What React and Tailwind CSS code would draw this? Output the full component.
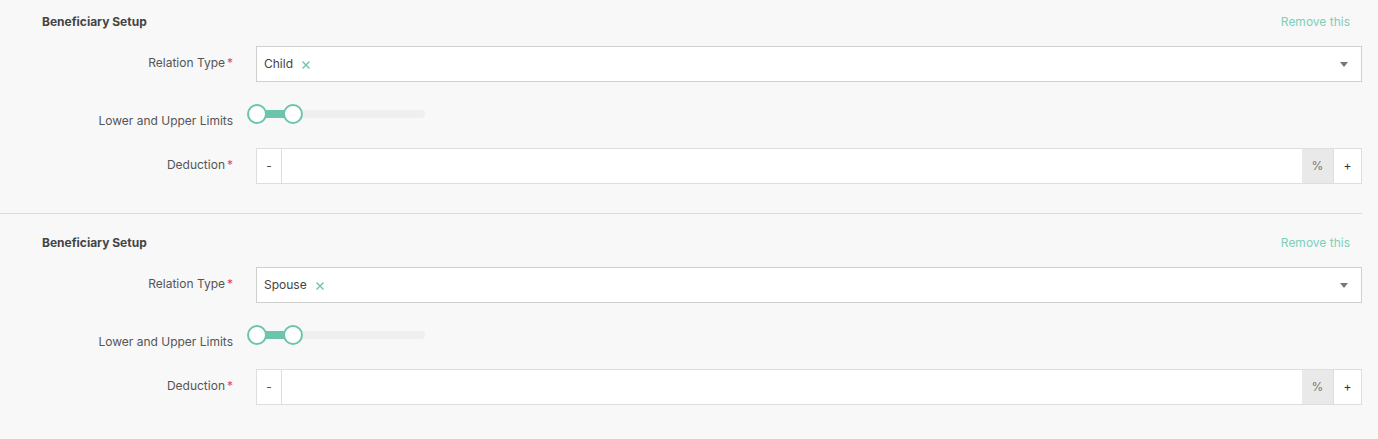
import React from 'react';

function Field({ label, required, labelClass = '', children }) {
    return (
        <div className="flex">
            <div
                className={`w-[233px] shrink-0 text-right text-[12px] leading-4 text-[#555] ${labelClass}`}
            >
                {label}
                {required && <span className="ml-[2px] text-[#e5484d]">*</span>}
            </div>
            <div className="ml-[23px] flex-1">{children}</div>
        </div>
    );
}

function RangeSlider() {
    return (
        <div className="relative h-5 w-[178px]">
            <div className="absolute left-[2px] right-0 top-[6px] h-2 rounded-full bg-[#efefef]" />
            <div className="absolute left-[10px] top-[6px] h-2 w-[36px] bg-[#6cc4ad]" />
            <div className="absolute left-0 top-0 h-5 w-5 rounded-full border-2 border-[#6cc4ad] bg-white" />
            <div className="absolute left-[36px] top-0 h-5 w-5 rounded-full border-2 border-[#6cc4ad] bg-white" />
        </div>
    );
}

function Section({ relation, divider }) {
    return (
        <section
            className={`pt-[14px] ${divider ? 'mb-[7px] border-b border-[#dcdcdc] pb-[29px]' : 'pb-[28px]'}`}
        >
            <div className="flex items-center justify-between pl-[42px] pr-[12px] text-[12px] leading-4">
                <h2 className="font-bold text-[#444]">Beneficiary Setup</h2>
                <button type="button" className="text-[#7dcfb9]">
                    Remove this
                </button>
            </div>

            <div className="mt-[16px]">
                <Field label="Relation Type" required labelClass="pt-[9px]">
                    <div className="flex h-9 items-center border border-[#cfcfcf] bg-white pl-[7px] pr-[13px]">
                        <span className="text-[12px] text-[#444]">{relation}</span>
                        <svg
                            className="ml-[9px] mt-[2px]"
                            width="8"
                            height="8"
                            viewBox="0 0 8 8"
                        >
                            <path
                                d="M0.5 0.5 L7.5 7.5 M7.5 0.5 L0.5 7.5"
                                stroke="#6cc4ad"
                                strokeWidth="1.4"
                            />
                        </svg>
                        <span className="ml-auto h-0 w-0 border-x-[4px] border-t-[5px] border-x-transparent border-t-[#777]" />
                    </div>
                </Field>
            </div>

            <div className="mt-[21px]">
                <Field label="Lower and Upper Limits" labelClass="pt-[10px]">
                    <div className="-ml-[9px] pt-px">
                        <RangeSlider />
                    </div>
                </Field>
            </div>

            <div className="mt-[19px]">
                <Field label="Deduction" required labelClass="pt-[9px]">
                    <div className="flex h-9 border border-[#dedede] bg-white text-[12px] text-[#555]">
                        <button
                            type="button"
                            className="w-[25px] border-r border-[#dedede]"
                        >
                            -
                        </button>
                        <input className="flex-1 bg-white px-2 outline-none" />
                        <span className="flex w-[31px] items-center justify-center bg-[#e9e9e9] text-[#777]">
                            %
                        </span>
                        <button
                            type="button"
                            className="w-[28px] border-l border-[#dedede] text-[#333]"
                        >
                            +
                        </button>
                    </div>
                </Field>
            </div>
        </section>
    );
}

export default function App() {
    return (
        <main
            className="min-h-screen bg-[#f8f8f8]"
            style={{ fontFamily: 'Inter, "Noto Sans", sans-serif' }}
        >
            <div className="w-[1362px]">
                <Section relation="Child" divider />
                <Section relation="Spouse" />
            </div>
        </main>
    );
}
